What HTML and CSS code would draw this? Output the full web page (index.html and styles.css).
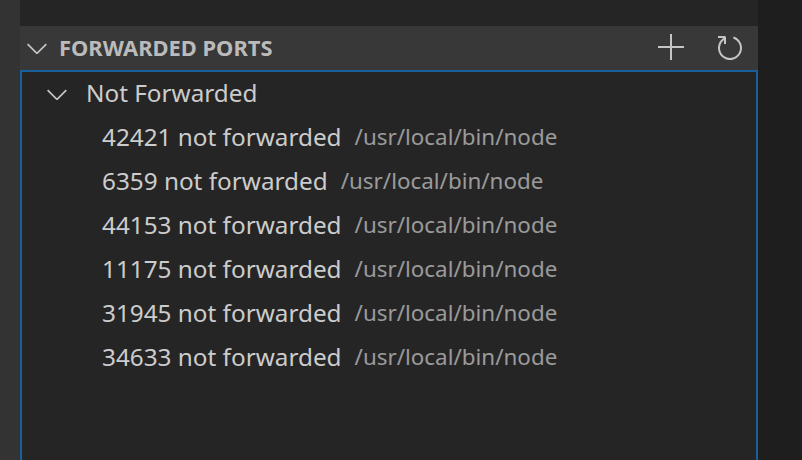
FILE: index.html
```html
<!DOCTYPE html>
<html>
<head>
<meta charset="utf-8">
<link rel="stylesheet" href="styles.css">
</head>
<body>
<div class="activity"></div>
<div class="sidebar">
  <div class="prev-pane"></div>
  <div class="pane-header">
    <svg class="twist" viewBox="0 0 16 16"><path d="M7.976 10.072l4.357-4.357.62.618L8.284 11h-.618L3 6.333l.619-.618 4.357 4.357z"/></svg>
    <span class="pane-title">FORWARDED PORTS</span>
    <div class="actions">
      <svg class="action" viewBox="0 0 16 16"><path d="M14 7v1H8v6H7V8H1V7h6V1h1v6h6z"/></svg>
      <svg class="action" viewBox="0 0 16 16"><path d="M4.681 3H2V2h3.5l.5.5V6H5V4a5 5 0 1 0 4.53-.761l.302-.954A6 6 0 1 1 4.681 3z"/></svg>
    </div>
  </div>
  <div class="tree">
    <div class="row group">
      <svg class="twist" viewBox="0 0 16 16"><path d="M7.976 10.072l4.357-4.357.62.618L8.284 11h-.618L3 6.333l.619-.618 4.357 4.357z"/></svg>
      <span class="label">Not Forwarded</span>
    </div>
    <div class="row leaf"><span class="label">42421 not forwarded</span><span class="desc">/usr/local/bin/node</span></div>
    <div class="row leaf"><span class="label">6359 not forwarded</span><span class="desc">/usr/local/bin/node</span></div>
    <div class="row leaf"><span class="label">44153 not forwarded</span><span class="desc">/usr/local/bin/node</span></div>
    <div class="row leaf"><span class="label">11175 not forwarded</span><span class="desc">/usr/local/bin/node</span></div>
    <div class="row leaf"><span class="label">31945 not forwarded</span><span class="desc">/usr/local/bin/node</span></div>
    <div class="row leaf"><span class="label">34633 not forwarded</span><span class="desc">/usr/local/bin/node</span></div>
  </div>
</div>
<div class="editor"></div>
</body>
</html>
```
FILE: styles.css
```css
html, body {
  margin: 0;
  padding: 0;
  height: 100%;
  overflow: hidden;
}
body {
  display: flex;
  background: #1e1e1e;
  font-family: "Noto Sans", "Open Sans", sans-serif;
  color: #cccccc;
}
.activity {
  width: 20px;
  flex: none;
  background: #333333;
}
.sidebar {
  width: 738px;
  flex: none;
  display: flex;
  flex-direction: column;
  background: #252526;
  height: 100%;
}
.prev-pane {
  height: 26px;
  flex: none;
  background: #252526;
}
.pane-header {
  height: 44px;
  flex: none;
  display: flex;
  align-items: center;
  background: #383838;
  color: #bbbbbb;
}
.pane-header .twist {
  width: 32px;
  height: 32px;
  margin-left: 1px;
  margin-right: 6px;
  fill: #c5c5c5;
}
.pane-title {
  font-weight: 700;
  font-size: 21.9px;
  line-height: 44px;
}
.actions {
  margin-left: auto;
  display: flex;
  gap: 14px;
  margin-right: 6px;
}
.action {
  width: 32px;
  height: 32px;
  padding: 6px;
  fill: #c5c5c5;
}
.tree {
  flex: 1;
  border: 2px solid #17609c;
  border-bottom: none;
}
.row {
  height: 44px;
  box-sizing: border-box;
  padding-bottom: 4px;
  display: flex;
  align-items: center;
  font-size: 24.3px;
  white-space: nowrap;
}
.row.group {
  padding-left: 19px;
}
.row.group .twist {
  width: 32px;
  height: 32px;
  margin-top: 4px;
  fill: #c5c5c5;
  margin-right: 13px;
}
.row.leaf {
  padding-left: 80px;
}
.desc {
  font-size: 22.4px;
  opacity: 0.7;
  margin-left: 13px;
}
.editor {
  flex: 1;
  background: #1e1e1e;
}
```
